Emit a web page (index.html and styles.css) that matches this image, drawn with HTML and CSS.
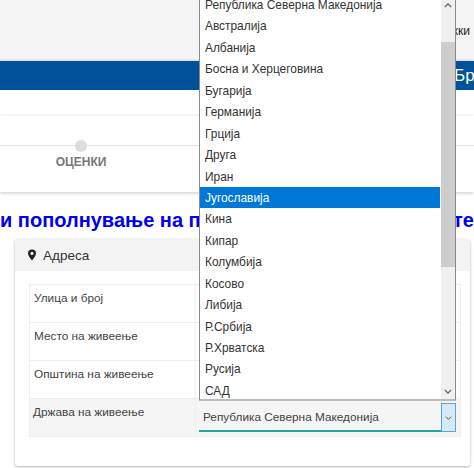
FILE: index.html
```html
<!DOCTYPE html>
<html lang="mk">
<head>
<meta charset="utf-8">
<title>Адреса</title>
<link rel="stylesheet" href="styles.css">
</head>
<body>
<div class="page">
  <header class="topbar"><span class="topbar-text">жки</span></header>
  <nav class="bluebar"><span class="bluebar-text">Бро</span></nav>
  <section class="steps">
    <div class="step">
      <span class="step-dot"></span>
      <span class="step-label">ОЦЕНКИ</span>
    </div>
  </section>
  <h2 class="notice"><span>и пополнување на податоци</span><span>те</span></h2>
  <section class="panel">
    <div class="panel-head">
      <svg class="pin" viewBox="0 0 10 14" width="8" height="12"><path fill-rule="evenodd" d="M5 0a5 5 0 0 1 5 5c0 3-3.400 6.600-5 9-1.600-2.400-5-6-5-9a5 5 0 0 1 5-5zm0 3a2 2 0 1 0 0 4 2 2 0 0 0 0-4z"/></svg>
      <span>Адреса</span>
    </div>
    <div class="panel-body">
      <div class="row"><div class="label">Улица и број</div><div class="value"></div></div>
      <div class="row"><div class="label">Место на живеење</div><div class="value"></div></div>
      <div class="row"><div class="label">Општина на живеење</div><div class="value"></div></div>
      <div class="row row-shaded"><div class="label">Држава на живеење</div>
        <div class="value">
          <div class="select">
            <span class="select-text">Република Северна Македонија</span>
            <span class="select-btn"><svg viewBox="0 0 10 6" width="7" height="4"><path d="M1 1l4 4 4-4" fill="none" stroke="#444" stroke-width="1.300"/></svg></span>
          </div>
        </div>
      </div>
    </div>
  </section>
</div>
<div class="dropdown">
  <ul class="options">
    <li>Република Северна Македонија</li>
    <li>Австралија</li>
    <li>Албанија</li>
    <li>Босна и Херцеговина</li>
    <li>Бугарија</li>
    <li>Германија</li>
    <li>Грција</li>
    <li>Друга</li>
    <li>Иран</li>
    <li class="selected">Југославија</li>
    <li>Кина</li>
    <li>Кипар</li>
    <li>Колумбија</li>
    <li>Косово</li>
    <li>Либија</li>
    <li>Р.Србија</li>
    <li>Р.Хрватска</li>
    <li>Русија</li>
    <li>САД</li>
  </ul>
  <div class="scrollbar">
    <svg class="arrow-up" viewBox="0 0 10 6" width="8" height="5"><path d="M1 5l4-4 4 4" fill="none" stroke="#555" stroke-width="1.500"/></svg>
    <span class="thumb"></span>
    <svg class="arrow-down" viewBox="0 0 10 6" width="8" height="5"><path d="M1 1l4 4 4-4" fill="none" stroke="#555" stroke-width="1.500"/></svg>
  </div>
</div>
</body>
</html>
```

FILE: styles.css
```css
* { box-sizing: border-box; }
html, body { margin: 0; padding: 0; height: 100%; overflow: hidden; background: #fff; }
body { position: relative; font-family: "Liberation Sans", Arial, sans-serif; color: #333; }
.page { width: 474px; height: 468px; overflow: hidden; }

.topbar { height: 61px; background: #f5f5f5; display: flex; justify-content: flex-end; align-items: center; padding: 0 4px 0 0; }
.topbar-text { font-size: 12px; color: #222; }
.bluebar { height: 29px; background: #00529b; display: flex; align-items: center; padding-left: 454px; box-shadow: 0 -1px 2px rgba(0,0,0,.15); white-space: nowrap; overflow: hidden; }
.bluebar-text { color: #fff; font-size: 17px; }

.steps { margin-top: 26px; height: 76px; background: #fff; box-shadow: 0 1px 4px rgba(0,0,0,.22); position: relative; }
.steps::before { content: ""; display: block; height: 29px; border-bottom: 1px solid #e2e2e2; }
.step { width: 162px; display: flex; flex-direction: column; align-items: center; margin-top: -6px; }
.step-dot { width: 12px; height: 12px; border-radius: 50%; background: #ddd; }
.step-label { margin-top: 3px; font-size: 12px; font-weight: 700; color: #777; }

.notice { margin: 16px 0 0; display: flex; justify-content: space-between; font-size: 20px; line-height: 24px; font-weight: 700; color: #0000f0; white-space: nowrap; }

.panel { margin: 7px 4px 0 15px; height: 227px; background: #fff; box-shadow: 0 1px 3px rgba(0,0,0,.3); border-radius: 3px; }
.panel-head { height: 32px; background: #f3f3f3; display: flex; align-items: center; gap: 7px; padding-left: 13px; font-size: 13.500px; color: #333; }
.pin { fill: #222; }
.panel-body { margin: 13px 9px 0 14px; border: 1px solid #eee; }
.row { display: flex; height: 38px; border-bottom: 1px solid #eee; }
.row:last-child { border-bottom: 0; height: 37px; }
.row-shaded { background: #f5f5f5; }
.label { width: 165px; padding: 6px 0 0 4px; font-size: 11.800px; color: #444; }
.row-shaded .label { padding-left: 3px; }
.value { flex: 1; border-left: 1px solid #eee; }
.select { margin: 4px 0 0 3px; width: 257px; height: 29px; display: flex; align-items: center; justify-content: space-between; border-bottom: 2px solid #26a69a; }
.select-text { padding-left: 4px; font-size: 11.800px; color: #444; white-space: nowrap; }
.select-btn { width: 15px; height: 29px; margin-bottom: -2px; background: #d6e9f9; border: 1px solid #5aa3d8; display: flex; align-items: center; justify-content: center; }

.dropdown { position: absolute; left: 199px; top: 0; width: 257px; height: 401px; background: #fff; border: 1px solid #8a8a8a; border-top: 0; border-bottom-color: #bbb; border-bottom-width: 2px; overflow: hidden; }
.options { list-style: none; margin: -6px 15px 0 0; padding: 0; }
.options li { height: 21.44px; line-height: 23px; padding-left: 5px; font-size: 11.900px; color: #333; white-space: nowrap; }
.options .selected { background: #0078d7; color: #fff; }
.scrollbar { position: absolute; top: 0; right: 0; bottom: 0; width: 14px; background: #f0f0f0; }
.thumb { position: absolute; left: 0; right: 0; top: 42px; height: 225px; background: #cdcdcd; }
.arrow-up { position: absolute; left: 3px; top: 3px; }
.arrow-down { position: absolute; left: 3px; bottom: 5px; }
```
